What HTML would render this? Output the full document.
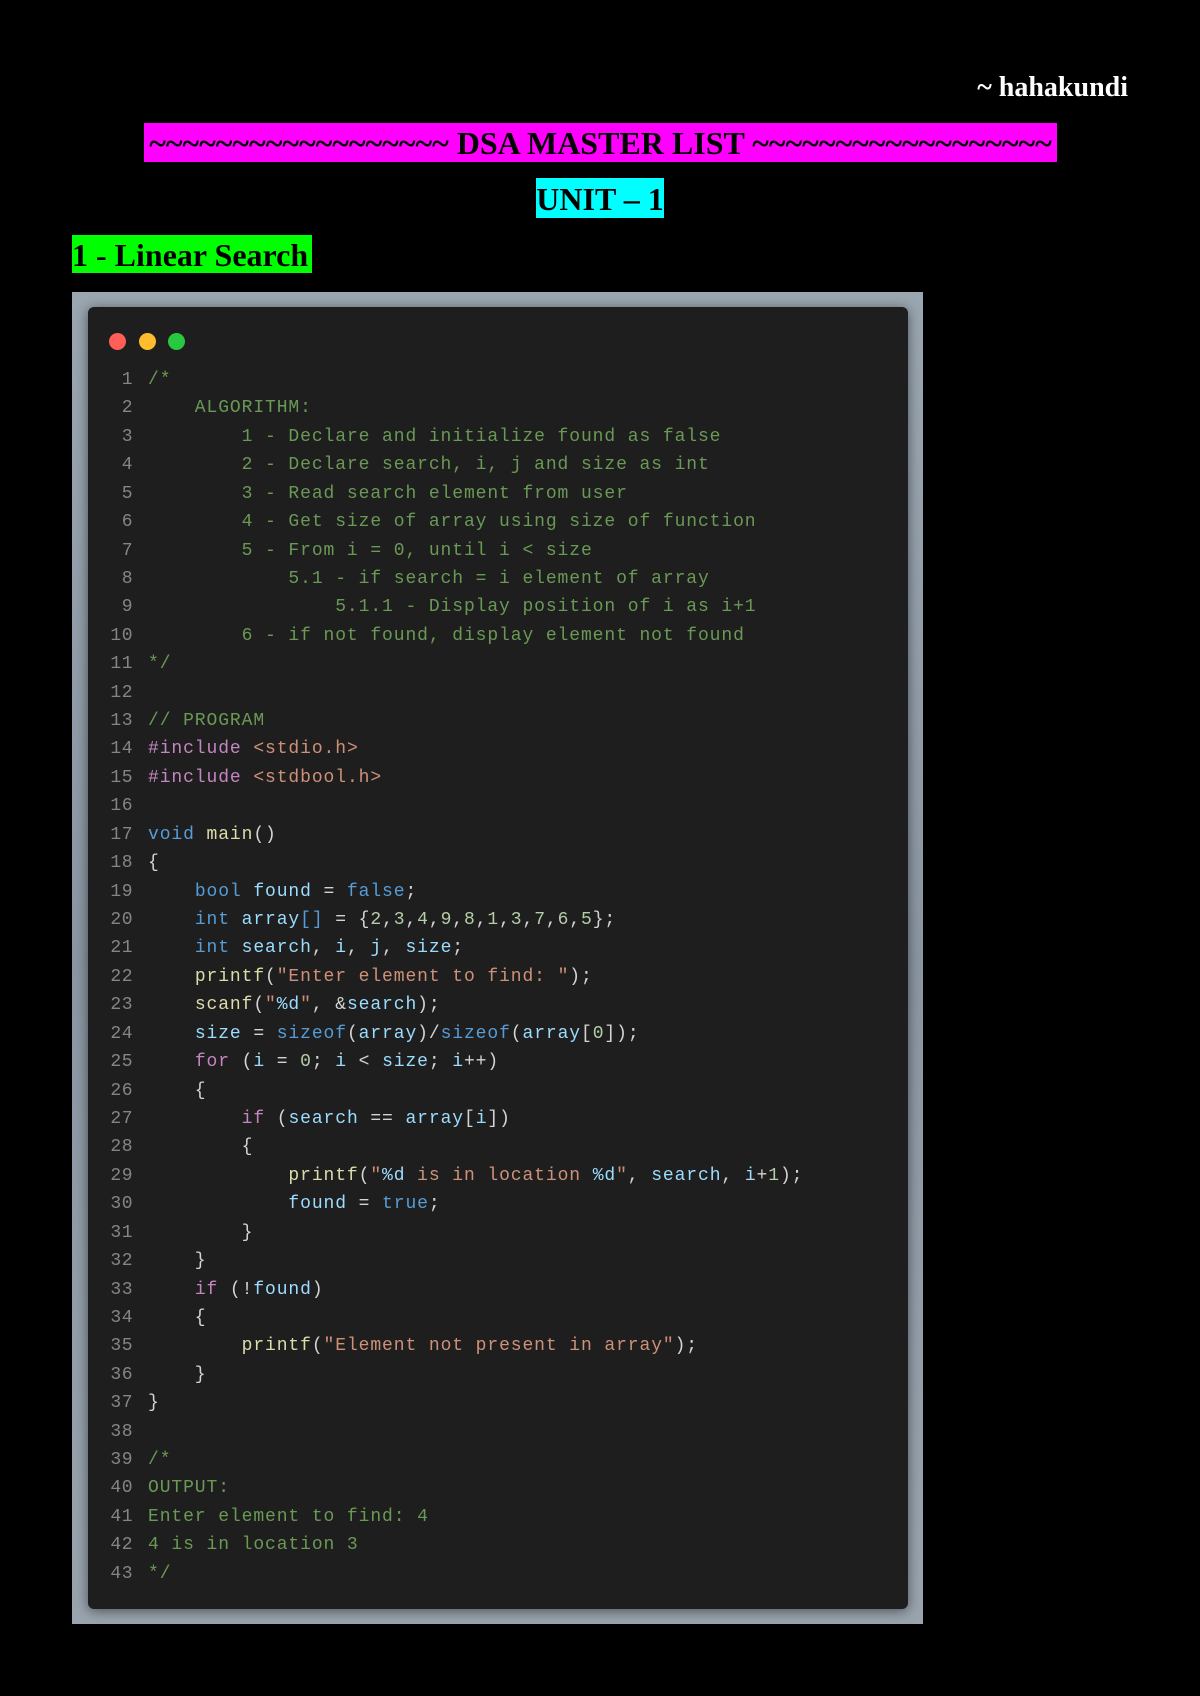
<!DOCTYPE html>
<html><head><meta charset="utf-8"><style>
html,body{margin:0;padding:0;background:#000;width:1200px;height:1696px;overflow:hidden;position:relative}
.serif{font-family:"Liberation Serif",serif;font-weight:bold;color:#000;position:absolute}
#author{right:72px;top:72px;font-size:28px;color:#fff}
#title{left:144px;top:123px;width:913px;height:39px;background:#f0f;font-size:32px;line-height:41px;text-align:center;white-space:nowrap;overflow:hidden}
#unit{left:536px;top:178px;width:128px;height:40px;background:#0ff;font-size:32px;line-height:42px;text-align:center;white-space:nowrap;overflow:hidden}
#sec{left:72px;top:235px;width:240px;height:38px;background:#0f0;font-size:32px;line-height:40px;white-space:nowrap;overflow:hidden}
#frame{position:absolute;left:72px;top:292px;width:851px;height:1332px;background:linear-gradient(#9aa6b0,#8a96a2 50%,#9aa4ae)}
#box{position:absolute;left:16px;top:15px;width:820px;height:1302px;background:#1e1e1e;border-radius:6px;box-shadow:0 2px 12px rgba(0,0,0,.5)}
.dot{position:absolute;top:26px;width:17px;height:17px;border-radius:50%}
pre{position:absolute;left:0;top:59px;margin:0;font-family:"Liberation Mono",monospace;font-size:18px;letter-spacing:0.9px;line-height:28.42px;color:#d4d4d4}
.n{display:inline-block;width:45px;text-align:right;color:#858585;margin-right:15px;letter-spacing:0.5px}
.c{color:#6a9955}.k{color:#569cd6}.p{color:#c586c0}.f{color:#dcdcaa}.s{color:#ce9178}.v{color:#9cdcfe}.m{color:#b5cea8}
</style></head><body>
<div class="serif" id="author">~ hahakundi</div>
<div class="serif" id="title">~~~~~~~~~~~~~~~~~~ DSA MASTER LIST ~~~~~~~~~~~~~~~~~~</div>
<div class="serif" id="unit">UNIT – 1</div>
<div class="serif" id="sec">1 - Linear Search</div>
<div id="frame"><div id="box">
<div class="dot" style="left:21px;background:#ff5f56"></div>
<div class="dot" style="left:51px;background:#ffbd2e"></div>
<div class="dot" style="left:80px;background:#27c93f"></div>
<pre><span class="n">1</span><span class="c">/*</span>
<span class="n">2</span><span class="c">    ALGORITHM:</span>
<span class="n">3</span><span class="c">        1 - Declare and initialize found as false</span>
<span class="n">4</span><span class="c">        2 - Declare search, i, j and size as int</span>
<span class="n">5</span><span class="c">        3 - Read search element from user</span>
<span class="n">6</span><span class="c">        4 - Get size of array using size of function</span>
<span class="n">7</span><span class="c">        5 - From i = 0, until i &lt; size</span>
<span class="n">8</span><span class="c">            5.1 - if search = i element of array</span>
<span class="n">9</span><span class="c">                5.1.1 - Display position of i as i+1</span>
<span class="n">10</span><span class="c">        6 - if not found, display element not found</span>
<span class="n">11</span><span class="c">*/</span>
<span class="n">12</span>
<span class="n">13</span><span class="c">// PROGRAM</span>
<span class="n">14</span><span class="p">#include</span> <span class="s">&lt;stdio.h&gt;</span>
<span class="n">15</span><span class="p">#include</span> <span class="s">&lt;stdbool.h&gt;</span>
<span class="n">16</span>
<span class="n">17</span><span class="k">void</span> <span class="f">main</span>()
<span class="n">18</span>{
<span class="n">19</span>    <span class="k">bool</span> <span class="v">found</span> = <span class="k">false</span>;
<span class="n">20</span>    <span class="k">int</span> <span class="v">array</span><span class="k">[]</span> = {<span class="m">2</span>,<span class="m">3</span>,<span class="m">4</span>,<span class="m">9</span>,<span class="m">8</span>,<span class="m">1</span>,<span class="m">3</span>,<span class="m">7</span>,<span class="m">6</span>,<span class="m">5</span>};
<span class="n">21</span>    <span class="k">int</span> <span class="v">search</span>, <span class="v">i</span>, <span class="v">j</span>, <span class="v">size</span>;
<span class="n">22</span>    <span class="f">printf</span>(<span class="s">"Enter element to find: "</span>);
<span class="n">23</span>    <span class="f">scanf</span>(<span class="s">"</span><span class="v">%d</span><span class="s">"</span>, &amp;<span class="v">search</span>);
<span class="n">24</span>    <span class="v">size</span> = <span class="k">sizeof</span>(<span class="v">array</span>)/<span class="k">sizeof</span>(<span class="v">array</span>[<span class="m">0</span>]);
<span class="n">25</span>    <span class="p">for</span> (<span class="v">i</span> = <span class="m">0</span>; <span class="v">i</span> &lt; <span class="v">size</span>; <span class="v">i</span>++)
<span class="n">26</span>    {
<span class="n">27</span>        <span class="p">if</span> (<span class="v">search</span> == <span class="v">array</span>[<span class="v">i</span>])
<span class="n">28</span>        {
<span class="n">29</span>            <span class="f">printf</span>(<span class="s">"</span><span class="v">%d</span><span class="s"> is in location </span><span class="v">%d</span><span class="s">"</span>, <span class="v">search</span>, <span class="v">i</span>+<span class="m">1</span>);
<span class="n">30</span>            <span class="v">found</span> = <span class="k">true</span>;
<span class="n">31</span>        }
<span class="n">32</span>    }
<span class="n">33</span>    <span class="p">if</span> (!<span class="v">found</span>)
<span class="n">34</span>    {
<span class="n">35</span>        <span class="f">printf</span>(<span class="s">"Element not present in array"</span>);
<span class="n">36</span>    }
<span class="n">37</span>}
<span class="n">38</span>
<span class="n">39</span><span class="c">/*</span>
<span class="n">40</span><span class="c">OUTPUT:</span>
<span class="n">41</span><span class="c">Enter element to find: 4</span>
<span class="n">42</span><span class="c">4 is in location 3</span>
<span class="n">43</span><span class="c">*/</span></pre>
</div></div>
</body></html>
